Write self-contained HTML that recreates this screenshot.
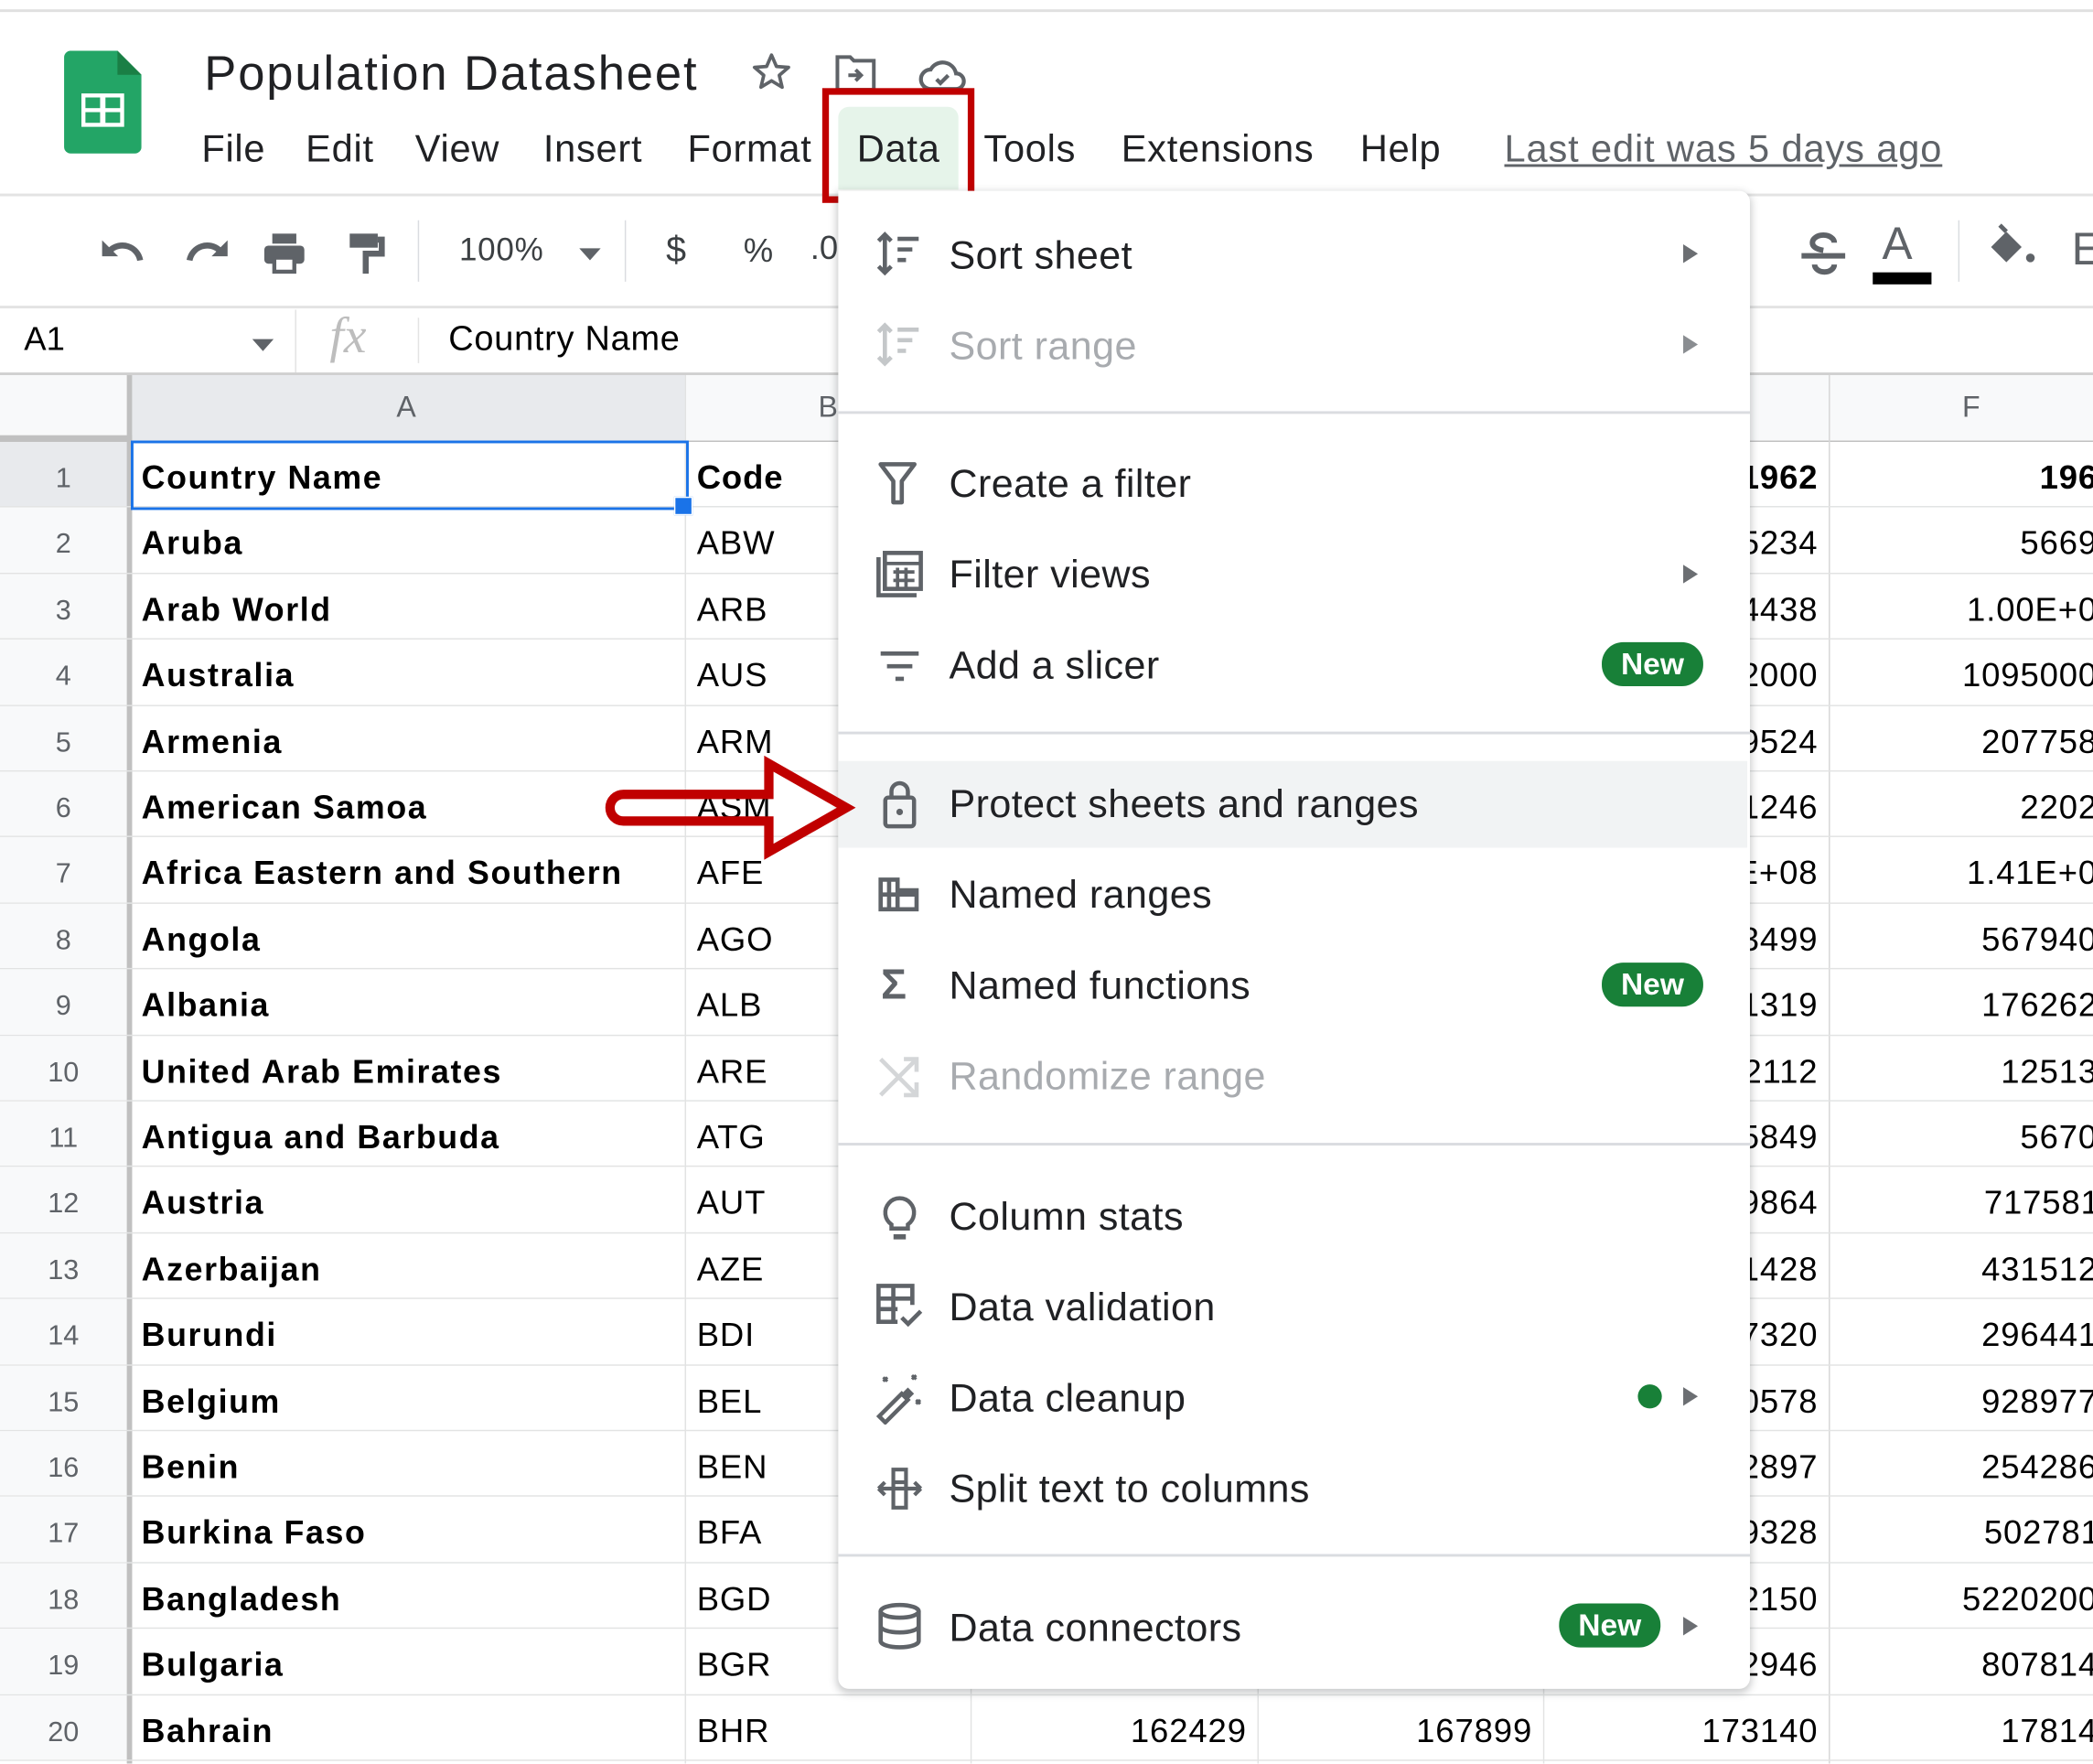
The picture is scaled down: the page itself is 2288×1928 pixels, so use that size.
<!DOCTYPE html>
<html><head><meta charset="utf-8"><style>
html,body{margin:0;padding:0;background:#fff;overflow:hidden;width:2288px;height:1927px}
#s{position:absolute;left:0;top:0;width:1568px;height:1321px;transform:scale(1.45918);transform-origin:0 0;font-family:"Liberation Sans",Arial,sans-serif;color:#202124;overflow:hidden}
.a{position:absolute}
.t{position:absolute;white-space:nowrap}
.menu{font-size:28.5px;color:#202124;top:96px;letter-spacing:0.5px}
.vl{position:absolute;background:#e2e3e3;width:1px}
.row{position:absolute;left:0;width:1568px;height:49.4px;border-bottom:1px solid #e2e3e3;box-sizing:border-box}
.rn{position:absolute;left:0;top:0;width:95px;height:100%;background:#f8f9fa;text-align:center;font-size:21px;color:#5f6368;line-height:55px;border-right:4px solid #c0c0c0;box-sizing:content-box}
.ca{position:absolute;left:106px;top:3px;font-size:24.5px;font-weight:bold;line-height:49px;color:#000;letter-spacing:1.1px}
.cb{position:absolute;left:522px;top:3px;font-size:25px;line-height:49px;color:#000;letter-spacing:0.6px}
.num{position:absolute;top:3px;font-size:25px;line-height:49px;color:#000;text-align:right;letter-spacing:0.6px}
.mi{position:absolute;left:711px;font-size:29.5px;color:#202124;white-space:nowrap;letter-spacing:0.3px;margin-top:3px}
.dis{color:#a8abaf}
.new{position:absolute;background:#188038;color:#fff;font-weight:bold;font-size:23px;border-radius:16px;width:76px;height:33px;line-height:33px;text-align:center}
.arr{position:absolute;width:0;height:0;border-top:7px solid transparent;border-bottom:7px solid transparent;border-left:11px solid #6b6e72}
.ic{position:absolute;left:655px}
</style></head><body><div id="s">
<div class="a" style="left:0;top:7px;width:1568px;height:2px;background:#e0e0e0"></div>
<svg class="a" style="left:48px;top:38px" width="58" height="78" viewBox="0 0 58 78"><path d="M5 0H40L58 18V72a5 5 0 0 1-5 5H5a5 5 0 0 1-5-5V5a5 5 0 0 1 5-5z" fill="#23a566"/><path d="M40 0V18H58z" fill="#1a7f45"/><rect x="13" y="32" width="32" height="25" fill="#fff"/><rect x="16" y="35" width="11" height="8" fill="#23a566"/><rect x="31" y="35" width="11" height="8" fill="#23a566"/><rect x="16" y="46" width="11" height="8" fill="#23a566"/><rect x="31" y="46" width="11" height="8" fill="#23a566"/></svg>
<div class="t" style="left:153px;top:34px;font-size:36px;color:#202124;letter-spacing:1.3px">Population Datasheet</div>
<svg class="a" style="left:561px;top:37px" width="34" height="34" viewBox="0 0 24 24"><path d="M12 3l2.6 6 6.4.5-4.9 4.2 1.5 6.3L12 16.6 6.4 20l1.5-6.3L3 9.5 9.4 9z" fill="none" stroke="#5f6368" stroke-width="1.8" stroke-linejoin="round"/></svg>
<svg class="a" style="left:624px;top:40px" width="34" height="30" viewBox="0 0 24 22"><path d="M2 2h7l2 2h11v16H2z" fill="none" stroke="#5f6368" stroke-width="2"/><path d="M8 12h7M12 9l3 3-3 3" fill="none" stroke="#5f6368" stroke-width="2"/></svg>
<svg class="a" style="left:687px;top:40px" width="38" height="30" viewBox="0 0 26 20"><path d="M7 18a5 5 0 0 1 0-10 7 7 0 0 1 13 2 4 4 0 0 1 0 8z" fill="none" stroke="#5f6368" stroke-width="2"/><path d="M10 13l2 2 4-4" fill="none" stroke="#5f6368" stroke-width="2"/></svg>
<div class="t menu" style="left:151px">File</div>
<div class="t menu" style="left:229px">Edit</div>
<div class="t menu" style="left:311px">View</div>
<div class="t menu" style="left:407px">Insert</div>
<div class="t menu" style="left:515px">Format</div>
<div class="a" style="left:628px;top:80px;width:90px;height:62px;background:#e6f4ea;border-radius:8px 8px 0 0"></div>
<div class="t menu" style="left:642px">Data</div>
<div class="t menu" style="left:737px">Tools</div>
<div class="t menu" style="left:840px">Extensions</div>
<div class="t menu" style="left:1019px">Help</div>
<div class="t menu" style="left:1127px;color:#5f6368;text-decoration:underline;letter-spacing:0.6px">Last edit was 5 days ago</div>
<div class="a" style="left:0;top:145px;width:1568px;height:2px;background:#e3e3e3"></div>
<svg class="a" style="left:75px;top:175px" width="36" height="28" viewBox="0 0 24 18"><path d="M5 8a9 9 0 0 1 15 5" fill="none" stroke="#5f6368" stroke-width="3"/><path d="M1 3v8h8z" fill="#5f6368"/></svg>
<svg class="a" style="left:136px;top:175px" width="36" height="28" viewBox="0 0 24 18"><path d="M19 8a9 9 0 0 0-15 5" fill="none" stroke="#5f6368" stroke-width="3"/><path d="M23 3v8h-8z" fill="#5f6368"/></svg>
<svg class="a" style="left:195px;top:172px" width="36" height="36" viewBox="0 0 24 24"><rect x="6" y="2" width="12" height="5" fill="#5f6368"/><rect x="2" y="8" width="20" height="9" rx="2" fill="#5f6368"/><rect x="6" y="14" width="12" height="8" fill="#5f6368"/><rect x="8" y="15" width="8" height="5" fill="#fff"/></svg>
<svg class="a" style="left:258px;top:172px" width="32" height="36" viewBox="0 0 20 24"><rect x="2" y="2" width="14" height="7" fill="#5f6368"/><path d="M16 5h2v7h-8v10" fill="none" stroke="#5f6368" stroke-width="3"/></svg>
<div class="a" style="left:313px;top:165px;width:1px;height:46px;background:#dadce0"></div>
<div class="t" style="left:344px;top:174px;font-size:24px;color:#3c4043;letter-spacing:0.5px">100%</div>
<div class="a" style="left:434px;top:186px;border-left:8px solid transparent;border-right:8px solid transparent;border-top:9px solid #5f6368"></div>
<div class="a" style="left:468px;top:165px;width:1px;height:46px;background:#dadce0"></div>
<div class="t" style="left:499px;top:172px;font-size:27px;color:#3c4043">$</div>
<div class="t" style="left:557px;top:174px;font-size:25px;color:#3c4043">%</div>
<div class="t" style="left:607px;top:172px;font-size:25px;color:#3c4043">.0</div>
<svg class="a" style="left:1346px;top:172px" width="40" height="36" viewBox="0 0 24 22"><path d="M2 12h20" stroke="#5f6368" stroke-width="2.5"/><path d="M17 6a5 3.5 0 0 0-10 0c0 2 2 3 5 3.5M8 16a4 3 0 0 0 9 0" fill="none" stroke="#5f6368" stroke-width="2.5"/></svg>
<div class="t" style="left:1410px;top:164px;font-size:34px;color:#5f6368">A</div>
<div class="a" style="left:1403px;top:204px;width:44px;height:9px;background:#000"></div>
<div class="a" style="left:1467px;top:165px;width:1px;height:46px;background:#dadce0"></div>
<svg class="a" style="left:1488px;top:167px" width="40" height="36" viewBox="0 0 24 22"><path d="M2 11L9 4l7 7-7 7z" fill="#5f6368"/><path d="M9 4L6 1" stroke="#5f6368" stroke-width="2"/><circle cx="20" cy="16" r="2" fill="#5f6368"/></svg>
<div class="t" style="left:1552px;top:168px;font-size:34px;color:#5f6368">E</div>
<div class="a" style="left:0;top:229px;width:1568px;height:2px;background:#e3e3e3"></div>
<div class="t" style="left:18px;top:240px;font-size:25px;color:#000">A1</div>
<div class="a" style="left:189px;top:254px;border-left:8px solid transparent;border-right:8px solid transparent;border-top:9px solid #5f6368"></div>
<div class="a" style="left:221px;top:232px;width:1px;height:48px;background:#e3e3e3"></div>
<div class="t" style="left:247px;top:230px;font-size:38px;font-style:italic;font-family:'Liberation Serif',serif;color:#bdbdbd">fx</div>
<div class="a" style="left:313px;top:238px;width:1px;height:34px;background:#e3e3e3"></div>
<div class="t" style="left:336px;top:238px;font-size:26px;color:#000;letter-spacing:0.5px">Country Name</div>
<div class="a" style="left:0;top:279px;width:1568px;height:2px;background:#d0d0d0"></div>
<div class="a" style="left:0;top:281px;width:95px;height:45px;background:#f8f9fa"></div>
<div class="a" style="left:95px;top:281px;width:4px;height:1040px;background:#c0c0c0"></div>
<div class="a" style="left:0;top:326px;width:99px;height:5px;background:#c0c0c0"></div>
<div class="a" style="left:99px;top:281px;width:414px;height:49px;background:#e8eaed"></div>
<div class="a" style="left:513px;top:281px;width:1055px;height:49px;background:#f8f9fa"></div>
<div class="a" style="left:99px;top:330px;width:1469px;height:1px;background:#c0c0c0"></div>
<div class="t" style="left:297px;top:292px;font-size:22px;color:#5f6368">A</div>
<div class="t" style="left:613px;top:292px;font-size:22px;color:#5f6368">B</div>
<div class="t" style="left:1470px;top:292px;font-size:22px;color:#5f6368">F</div>
<div class="vl" style="left:513px;top:281px;height:1040px"></div>
<div class="vl" style="left:727px;top:281px;height:1040px"></div>
<div class="vl" style="left:942px;top:281px;height:1040px"></div>
<div class="vl" style="left:1156px;top:281px;height:1040px"></div>
<div class="vl" style="left:1370px;top:281px;height:1040px;background:#d6d6d6"></div>
<div class="row" style="top:331px"><div class="rn" style="background:#e8eaed">1</div><div class="ca">Country Name</div><div class="cb" style="font-weight:bold">Code</div><div class="num" style="right:206px;font-weight:bold">11962</div><div class="num" style="right:-18px;font-weight:bold">1963</div></div>
<div class="row" style="top:380.4px"><div class="rn">2</div><div class="ca">Aruba</div><div class="cb">ABW</div><div class="num" style="right:206px">55234</div><div class="num" style="right:-18px">56699</div></div>
<div class="row" style="top:429.8px"><div class="rn">3</div><div class="ca">Arab World</div><div class="cb">ARB</div><div class="num" style="right:206px">97334438</div><div class="num" style="right:-18px">1.00E+08</div></div>
<div class="row" style="top:479.2px"><div class="rn">4</div><div class="ca">Australia</div><div class="cb">AUS</div><div class="num" style="right:206px">10742000</div><div class="num" style="right:-18px">10950000</div></div>
<div class="row" style="top:528.6px"><div class="rn">5</div><div class="ca">Armenia</div><div class="cb">ARM</div><div class="num" style="right:206px">2009524</div><div class="num" style="right:-18px">2077584</div></div>
<div class="row" style="top:578px"><div class="rn">6</div><div class="ca">American Samoa</div><div class="cb">ASM</div><div class="num" style="right:206px">21246</div><div class="num" style="right:-18px">22029</div></div>
<div class="row" style="top:627.4px"><div class="rn">7</div><div class="ca">Africa Eastern and Southern</div><div class="cb">AFE</div><div class="num" style="right:206px">1.37E+08</div><div class="num" style="right:-18px">1.41E+08</div></div>
<div class="row" style="top:676.8px"><div class="rn">8</div><div class="ca">Angola</div><div class="cb">AGO</div><div class="num" style="right:206px">5523499</div><div class="num" style="right:-18px">5679409</div></div>
<div class="row" style="top:726.2px"><div class="rn">9</div><div class="ca">Albania</div><div class="cb">ALB</div><div class="num" style="right:206px">1711319</div><div class="num" style="right:-18px">1762621</div></div>
<div class="row" style="top:775.6px"><div class="rn">10</div><div class="ca">United Arab Emirates</div><div class="cb">ARE</div><div class="num" style="right:206px">112112</div><div class="num" style="right:-18px">125130</div></div>
<div class="row" style="top:825px"><div class="rn">11</div><div class="ca">Antigua and Barbuda</div><div class="cb">ATG</div><div class="num" style="right:206px">55849</div><div class="num" style="right:-18px">56701</div></div>
<div class="row" style="top:874.4px"><div class="rn">12</div><div class="ca">Austria</div><div class="cb">AUT</div><div class="num" style="right:206px">7129864</div><div class="num" style="right:-18px">7175811</div></div>
<div class="row" style="top:923.8px"><div class="rn">13</div><div class="ca">Azerbaijan</div><div class="cb">AZE</div><div class="num" style="right:206px">4171428</div><div class="num" style="right:-18px">4315127</div></div>
<div class="row" style="top:973.2px"><div class="rn">14</div><div class="ca">Burundi</div><div class="cb">BDI</div><div class="num" style="right:206px">2897320</div><div class="num" style="right:-18px">2964416</div></div>
<div class="row" style="top:1022.6px"><div class="rn">15</div><div class="ca">Belgium</div><div class="cb">BEL</div><div class="num" style="right:206px">9220578</div><div class="num" style="right:-18px">9289770</div></div>
<div class="row" style="top:1072px"><div class="rn">16</div><div class="ca">Benin</div><div class="cb">BEN</div><div class="num" style="right:206px">2482897</div><div class="num" style="right:-18px">2542864</div></div>
<div class="row" style="top:1121.4px"><div class="rn">17</div><div class="ca">Burkina Faso</div><div class="cb">BFA</div><div class="num" style="right:206px">4919328</div><div class="num" style="right:-18px">5027811</div></div>
<div class="row" style="top:1170.8px"><div class="rn">18</div><div class="ca">Bangladesh</div><div class="cb">BGD</div><div class="num" style="right:206px">50752150</div><div class="num" style="right:-18px">52202008</div></div>
<div class="row" style="top:1220.2px"><div class="rn">19</div><div class="ca">Bulgaria</div><div class="cb">BGR</div><div class="num" style="right:206px">8012946</div><div class="num" style="right:-18px">8078145</div></div>
<div class="row" style="top:1269.6px"><div class="rn">20</div><div class="ca">Bahrain</div><div class="cb">BHR</div><div class="num" style="right:634px">162429</div><div class="num" style="right:420px">167899</div><div class="num" style="right:206px">173140</div><div class="num" style="right:-18px">178142</div></div>
<div class="a" style="left:98px;top:330px;width:414px;height:48px;border:2px solid #1a73e8"></div>
<div class="a" style="left:505px;top:372px;width:12px;height:12px;background:#1a73e8;border:1px solid #fff"></div>
<div class="a" style="left:616px;top:66px;width:104px;height:76px;border:5px solid #c00000"></div>
<div class="a" style="left:628px;top:143px;width:683px;height:1122px;background:#fff;border-radius:0 8px 8px 8px;box-shadow:0 2px 6px 1px rgba(60,64,67,.28)"></div>
<div class="a" style="left:628px;top:570px;width:681px;height:65px;background:#f1f3f4"></div>
<div class="a" style="left:628px;top:308px;width:683px;height:2px;background:#dadce0"></div>
<div class="a" style="left:628px;top:548px;width:683px;height:2px;background:#dadce0"></div>
<div class="a" style="left:628px;top:856px;width:683px;height:2px;background:#dadce0"></div>
<div class="a" style="left:628px;top:1164px;width:683px;height:2px;background:#dadce0"></div>
<svg class="ic" style="top:172px" width="38" height="36" viewBox="0 0 24 22"><path d="M5 2v18M2 5l3-3 3 3M2 17l3 3 3-3" fill="none" stroke="#5f6368" stroke-width="2"/><path d="M11 4h10M11 9h7M11 14h4" stroke="#5f6368" stroke-width="2"/></svg>
<div class="mi" style="top:172px">Sort sheet</div><div class="arr" style="left:1261px;top:183px"></div>
<svg class="ic" style="top:240px" width="38" height="36" viewBox="0 0 24 22"><path d="M5 2v18M2 5l3-3 3 3M2 17l3 3 3-3" fill="none" stroke="#c4c7c9" stroke-width="2"/><path d="M11 4h10M11 9h7M11 14h4" stroke="#c4c7c9" stroke-width="2"/></svg>
<div class="mi dis" style="top:240px">Sort range</div><div class="arr" style="left:1261px;top:251px;border-left-color:#8a8d91"></div>
<svg class="ic" style="top:344px" width="38" height="36" viewBox="0 0 24 22"><path d="M3 2h16l-6 8v10h-4V10z" fill="none" stroke="#5f6368" stroke-width="2" stroke-linejoin="round"/></svg>
<div class="mi" style="top:343px">Create a filter</div>
<svg class="ic" style="top:411px" width="38" height="38" viewBox="0 0 24 24"><path d="M2 4v18h18" fill="none" stroke="#5f6368" stroke-width="2"/><rect x="5" y="2" width="17" height="17" fill="none" stroke="#5f6368" stroke-width="2"/><path d="M5 7h17M9 11h10M9 15h10M11 9v10M15 9v10" stroke="#5f6368" stroke-width="1.6"/></svg>
<div class="mi" style="top:411px">Filter views</div><div class="arr" style="left:1261px;top:423px"></div>
<svg class="ic" style="top:481px" width="38" height="36" viewBox="0 0 24 22"><path d="M3 5h18M6 11h12M10 17h4" stroke="#5f6368" stroke-width="2"/></svg>
<div class="mi" style="top:479px">Add a slicer</div><div class="new" style="left:1200px;top:481px">New</div>
<svg class="ic" style="top:582px" width="38" height="40" viewBox="0 0 24 26"><rect x="5" y="10" width="14" height="14" rx="1.5" fill="none" stroke="#5f6368" stroke-width="2"/><path d="M8 10V7a4 4 0 0 1 8 0v3" fill="none" stroke="#5f6368" stroke-width="2"/><circle cx="12" cy="17" r="1.6" fill="#5f6368"/></svg>
<div class="mi" style="top:583px">Protect sheets and ranges</div>
<svg class="ic" style="top:652px" width="38" height="36" viewBox="0 0 24 22"><path d="M3 4h8v14H3zM11 9h9v9h-9M3 11h17M7 4v14" fill="none" stroke="#5f6368" stroke-width="2"/></svg>
<div class="mi" style="top:651px">Named ranges</div>
<div class="t" style="left:660px;top:719px;font-size:32px;color:#5f6368;font-weight:bold">Σ</div>
<div class="mi" style="top:719px">Named functions</div><div class="new" style="left:1200px;top:721px">New</div>
<svg class="ic" style="top:788px" width="38" height="36" viewBox="0 0 24 22"><path d="M3 3l17 17M14 3h6v6M20 3L3 20M14 20h6v-6" fill="none" stroke="#d4d6d8" stroke-width="2"/></svg>
<div class="mi dis" style="top:787px">Randomize range</div>
<svg class="ic" style="top:891px" width="38" height="40" viewBox="0 0 24 26"><path d="M8 17a7 7 0 1 1 8 0v2H8z" fill="none" stroke="#5f6368" stroke-width="2"/><path d="M9 23h6" stroke="#5f6368" stroke-width="2.5"/></svg>
<div class="mi" style="top:892px">Column stats</div>
<svg class="ic" style="top:960px" width="38" height="38" viewBox="0 0 24 24"><path d="M11 19H2V2h16v9M2 8h16M2 13h9M9 2v17" fill="none" stroke="#5f6368" stroke-width="2"/><path d="M13 17l3 3 6-6" fill="none" stroke="#5f6368" stroke-width="2"/></svg>
<div class="mi" style="top:960px">Data validation</div>
<svg class="ic" style="top:1027px" width="38" height="40" viewBox="0 0 24 26"><path d="M2 22l11-11 3 3L5 25z" fill="none" stroke="#5f6368" stroke-width="2"/><path d="M13 11l3-3 3 3-3 3z" fill="#5f6368"/><path d="M4 3l2 2M6 3L4 5M18 2l2 2M20 2l-2 2M20 14l2 2M22 14l-2 2" stroke="#5f6368" stroke-width="1.4"/></svg>
<div class="mi" style="top:1028px">Data cleanup</div><div class="a" style="left:1227px;top:1037px;width:18px;height:18px;border-radius:50%;background:#188038"></div><div class="arr" style="left:1261px;top:1039px"></div>
<svg class="ic" style="top:1096px" width="38" height="38" viewBox="0 0 24 24"><path d="M9 3h6v6h-6zM9 9v12h6V9M2 12h20M2 12l3-3M2 12l3 3M22 12l-3-3M22 12l-3 3" fill="none" stroke="#5f6368" stroke-width="1.8"/></svg>
<div class="mi" style="top:1096px">Split text to columns</div>
<svg class="ic" style="top:1199px" width="38" height="38" viewBox="0 0 24 24"><ellipse cx="12" cy="5" rx="9" ry="3" fill="none" stroke="#5f6368" stroke-width="2"/><path d="M3 5v14c0 1.7 4 3 9 3s9-1.3 9-3V5M3 12c0 1.7 4 3 9 3s9-1.3 9-3" fill="none" stroke="#5f6368" stroke-width="2"/></svg>
<div class="mi" style="top:1200px">Data connectors</div><div class="new" style="left:1168px;top:1201px">New</div><div class="arr" style="left:1261px;top:1211px"></div>
<svg class="a" style="left:450px;top:560px" width="200" height="90" viewBox="0 0 200 90"><path d="M17 35H126V12L184 45 126 78V55H17a10 10 0 0 1 0-20z" fill="none" stroke="#c00000" stroke-width="7" stroke-linejoin="miter"/></svg>
</div></body></html>
